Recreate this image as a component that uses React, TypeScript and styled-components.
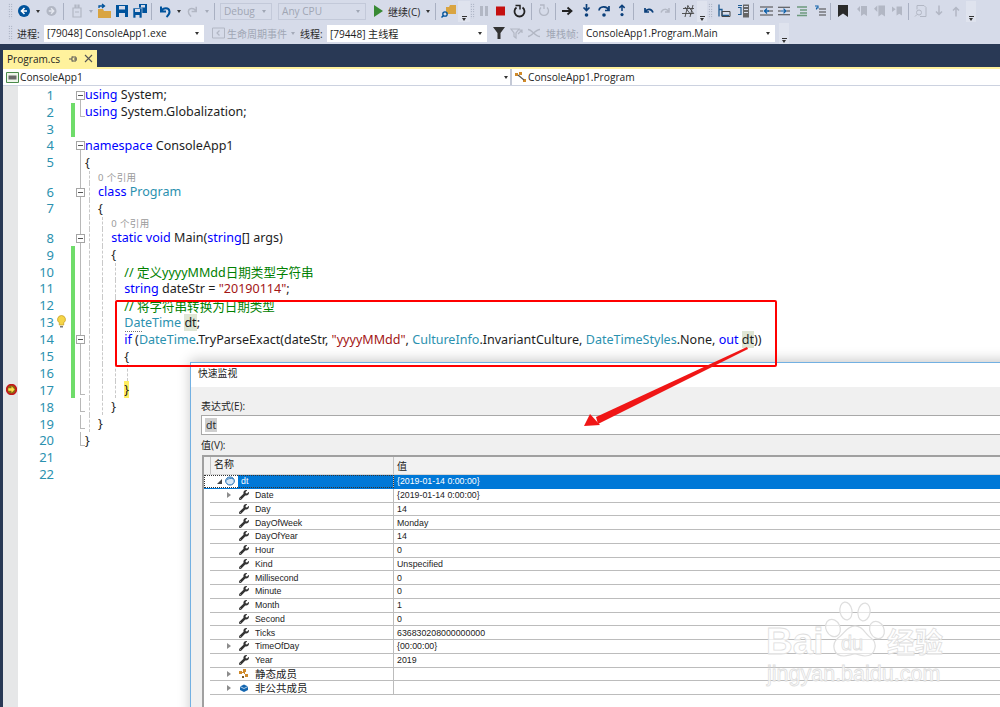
import React from "react";
import styled, { createGlobalStyle } from "styled-components";
import { FaWrench } from "react-icons/fa";

const UI = `"Open Sans", "Noto Sans CJK SC", sans-serif`;

const Global = createGlobalStyle`
  html, body { margin: 0; padding: 0; background: #fff; overflow: hidden; }
  #root { width: 1000px; height: 707px; }
`;

const Page = styled.div`
  position: relative;
  width: 1000px;
  height: 707px;
  overflow: hidden;
  display: flex;
  flex-direction: column;
  background: #293955;
  font-family: ${UI};
  color: #1e1e1e;
`;

const ToolRow = styled.div`
  display: flex;
  align-items: center;
  height: 22px;
  background: #d6dbe9;
  flex: none;
`;

const Tool = styled.span<{ $w: number; $ml: number }>`
  flex: none;
  display: flex;
  align-items: center;
  justify-content: center;
  width: ${(p) => p.$w}px;
  margin-left: ${(p) => p.$ml}px;
  height: 16px;
  svg { display: block; width: 100%; height: 100%; overflow: visible; }
`;

const Grip = styled.span<{ $w: number; $ml: number }>`
  flex: none;
  width: ${(p) => p.$w}px;
  margin-left: ${(p) => p.$ml}px;
  height: 16px;
  background-image: radial-gradient(#8a93a8 0.7px, transparent 0.8px);
  background-size: 2.5px 2.5px;
`;

const Sep = styled.span<{ $w: number; $ml: number }>`
  flex: none;
  width: 1px;
  margin-left: ${(p) => p.$ml}px;
  height: 17px;
  background: #a9b0c2;
`;

const Caret = styled.span<{ $w: number; $ml: number; $off?: boolean }>`
  flex: none;
  width: ${(p) => p.$w}px;
  margin-left: ${(p) => p.$ml}px;
  height: 16px;
  display: flex;
  align-items: center;
  justify-content: center;
  &::after {
    content: "";
    border-left: 2.5px solid transparent;
    border-right: 2.5px solid transparent;
    border-top: 3px solid ${(p) => (p.$off ? "#a5abb9" : "#333")};
  }
`;

const Overflow = styled.span<{ $w: number; $ml: number }>`
  flex: none;
  box-sizing: border-box;
  width: ${(p) => p.$w}px;
  margin-left: ${(p) => p.$ml}px;
  height: 21px;
  background: #dfe3ee;
  position: relative;
  &::before {
    content: "";
    position: absolute;
    left: 50%;
    bottom: 5px;
    margin-left: -2.5px;
    width: 5px;
    height: 1px;
    background: #333;
  }
  &::after {
    content: "";
    position: absolute;
    left: 50%;
    bottom: 1px;
    margin-left: -2.5px;
    border-left: 2.5px solid transparent;
    border-right: 2.5px solid transparent;
    border-top: 3px solid #333;
  }
`;

const Combo = styled.span<{ $w: number; $ml: number; $off?: boolean }>`
  flex: none;
  box-sizing: border-box;
  width: ${(p) => p.$w}px;
  margin-left: ${(p) => p.$ml}px;
  height: 17px;
  padding: 0 3px;
  display: flex;
  align-items: center;
  justify-content: space-between;
  font-size: 10.1px;
  white-space: nowrap;
  background: ${(p) => (p.$off ? "#d6dbe9" : "#fff")};
  border: ${(p) => (p.$off ? "1px solid #c3c9d9" : "none")};
  color: ${(p) => (p.$off ? "#a0a6b4" : "#1e1e1e")};
  &::after {
    content: "";
    margin-right: 2px;
    border-left: 2.5px solid transparent;
    border-right: 2.5px solid transparent;
    border-top: 3px solid ${(p) => (p.$off ? "#a0a6b4" : "#333")};
  }
`;

const Label = styled.span<{ $w: number; $ml: number; $off?: boolean }>`
  flex: none;
  width: ${(p) => p.$w}px;
  margin-left: ${(p) => p.$ml}px;
  font-size: 10px;
  white-space: nowrap;
  color: ${(p) => (p.$off ? "#a0a6b4" : "#2a2a2a")};
`;

const B = "#00539c";
const G = "#b2b7c4";
const K = "#222";
const icons: Record<string, React.ReactNode> = {
  back: <svg viewBox="0 0 12 12"><circle cx="6" cy="6" r="6" fill={B} /><path d="M6.500 3 3.500 6l3 3M3.500 6H9" stroke="#fff" strokeWidth="1.600" fill="none" /></svg>,
  fwd: <svg viewBox="0 0 12 12"><circle cx="6" cy="6" r="5.500" fill={G} /><path d="M5.500 3l3 3-3 3M8.500 6H3" stroke="#e4e7ef" strokeWidth="1.500" fill="none" /></svg>,
  newp: <svg viewBox="0 0 12 14"><path d="M2 4h8v9H2zM4 4V1h1v3M7 4V1h1v3M4 8h4" fill="none" stroke={G} strokeWidth="1.200" /></svg>,
  open: <svg viewBox="0 0 13 14"><path d="M0 5h5l1 2h7v7H0z" fill="#d9a441" /><path d="M1 4V2h5M4 0l2.500 2L4 4" stroke={B} strokeWidth="1.300" fill="none" /></svg>,
  save: <svg viewBox="0 0 12 12"><path d="M0 0h12v12H0z" fill={B} /><path d="M3 1h6v3.500H3z" fill="#d6dbe9" /><path d="M3 8h6v4H3z" fill="#d6dbe9" /></svg>,
  saveall: <svg viewBox="0 0 14 14"><path d="M6 0h8v9H6z" fill={B} /><path d="M8 1h4v2.500H8z" fill="#d6dbe9" /><path d="M0 4h9v10H0z" fill={B} stroke="#d6dbe9" strokeWidth=".6" /><path d="M2 5h5v3H2zM2.500 11h4v3h-4z" fill="#d6dbe9" /></svg>,
  undo: <svg viewBox="0 0 13 14"><path d="M3 2.500v5h5M3.500 7C5 3.500 11 3 11.500 7.500c.3 2.500-1.500 4-3 5.500" stroke={B} strokeWidth="2" fill="none" /></svg>,
  redo: <svg viewBox="0 0 13 14"><path d="M10 2.500v5H5M9.500 7C8 3.500 2 3 1.500 7.500c-.3 2.500 1.500 4 3 5.500" stroke={G} strokeWidth="1.600" fill="none" /></svg>,
  play: <svg viewBox="0 0 9 12"><path d="M0 0l9 6-9 6z" fill="#388a34" /></svg>,
  find: <svg viewBox="0 0 15 14"><path d="M5 3h3l1-2h6v9H5z" fill="#d9a441" /><circle cx="4" cy="10" r="2.200" fill="none" stroke={B} strokeWidth="1.300" /><path d="M2.500 11.500 0.500 13.500" stroke={B} strokeWidth="1.400" /></svg>,
  pause: <svg viewBox="0 0 8 10"><path d="M0 0h3v10H0zM5 0h3v10H5z" fill={G} /></svg>,
  stop: <svg viewBox="0 0 9 9"><path d="M0 0h9v9H0z" fill="#c50f0f" /></svg>,
  restart: <svg viewBox="0 0 13 13"><path d="M3.500 3a5 5 0 1 0 6 0" stroke={K} strokeWidth="1.800" fill="none" /><path d="M2.500 1h4.500v4" stroke={K} strokeWidth="1.500" fill="none" /></svg>,
  showNext: <svg viewBox="0 0 12 14"><path d="M3 3.500a4.500 4.500 0 1 0 6 0" stroke={G} strokeWidth="1.300" fill="none" /><path d="M2 1h4v4" stroke={G} strokeWidth="1.300" fill="none" /></svg>,
  step: <svg viewBox="0 0 11 10"><path d="M0 5h9M5.500 1.500 9.500 5l-4 3.500" stroke={K} strokeWidth="1.800" fill="none" /></svg>,
  into: <svg viewBox="0 0 9 14"><path d="M4.500 0v6M1.500 3.500l3 3 3-3" stroke="#0b3f7a" strokeWidth="1.700" fill="none" /><circle cx="4.500" cy="11" r="1.800" fill="#0b3f7a" /></svg>,
  over: <svg viewBox="0 0 12 14"><path d="M1 6.500C1.500 2 9 1.500 10.500 6M11 2v4.500H7" stroke="#0b3f7a" strokeWidth="1.700" fill="none" /><circle cx="6" cy="11" r="1.800" fill="#0b3f7a" /></svg>,
  out: <svg viewBox="0 0 9 14"><path d="M4.500 7V1M1.500 3.500l3-3 3 3" stroke="#0b3f7a" strokeWidth="1.700" fill="none" /><circle cx="4.500" cy="11" r="1.800" fill="#0b3f7a" /></svg>,
  mini: <svg viewBox="0 0 10 8"><path d="M1 1v4h4M1.500 4.500C3 1.500 7.500 1.500 9 5.500" stroke="#0b3f7a" strokeWidth="1.700" fill="none" /></svg>,
  miniOff: <svg viewBox="0 0 10 8"><path d="M9 1v4H5M8.500 4.500C7 1.500 2.500 1.500 1 5.500" stroke={G} strokeWidth="1.500" fill="none" /></svg>,
  hatch: <svg viewBox="0 0 13 14"><path d="M3 13 6 1M8 13l3-12M1 4.500h11M0 9.500h11M3 3l6 8M6 2l6 8" stroke="#444" strokeWidth=".9" fill="none" /></svg>,
  flag: <svg viewBox="0 0 13 13"><path d="M1 0v12M1 5h3v6h7" stroke="#1f5b92" strokeWidth="1.300" fill="none" /><path d="M4 7h8v5H4z" fill="none" stroke="#444" /></svg>,
  cols: <svg viewBox="0 0 12 13"><path d="M1 1h4M1 3h3v7H1" stroke="#1f5b92" strokeWidth="1.200" fill="none" /><path d="M6 0h6v13H6z" fill="#666" /><path d="M7 2h4M7 5h4M7 8h4" stroke="#d6dbe9" /></svg>,
  indL: <svg viewBox="0 0 13 10"><path d="M0 1h13M0 9h13M0 5h3M8 5h5" stroke="#444" strokeWidth="1.200" /><path d="M4 5h5M7 2.500 4.500 5 7 7.500" stroke="#0b5fa8" strokeWidth="1.300" fill="none" /></svg>,
  indR: <svg viewBox="0 0 13 10"><path d="M0 1h13M0 9h13M0 5h3M9 5h4" stroke="#444" strokeWidth="1.200" /><path d="M3 5h5M6 2.500 8.500 5 6 7.500" stroke="#0b5fa8" strokeWidth="1.300" fill="none" /></svg>,
  cmt: <svg viewBox="0 0 10 10"><path d="M0 1h10M3 4h7M3 7h7M0 9.500h10" stroke="#6d9a7e" strokeWidth="1.300" /></svg>,
  cmtQ: <svg viewBox="0 0 11 12"><path d="M4 4h7M4 7h7M4 10h7" stroke="#444" strokeWidth="1.200" /><path d="M0 1h3v2H1.500v1.500" stroke="#0b5fa8" strokeWidth="1.100" fill="none" /></svg>,
  mark: <svg viewBox="0 0 10 12"><path d="M0 0h10v12L5 8.500 0 12z" fill="#2a2a2a" /></svg>,
  markP: <svg viewBox="0 0 10 12"><path d="M4 1h6v10L7 9 4 11zM0 4l3-3v6z" fill={G} /></svg>,
  markD: <svg viewBox="0 0 11 12"><path d="M5 1h6v10L8 9 5 11zM0 1l4 3-4 3z" fill={G} /></svg>,
  search: <svg viewBox="0 0 12 13"><path d="M2 5V1h7l2 2v9H5" fill="none" stroke={G} /><circle cx="4" cy="8" r="2.500" fill="none" stroke={G} /><path d="M2 10l-2 2" stroke={G} /></svg>,
  down: <svg viewBox="0 0 8 11"><path d="M4 0v9M1 6l3 3 3-3" stroke={G} strokeWidth="1.500" fill="none" /></svg>,
  up: <svg viewBox="0 0 8 11"><path d="M4 11V2M1 5l3-3 3 3" stroke={G} strokeWidth="1.500" fill="none" /></svg>,
  event: <svg viewBox="0 0 13 11"><path d="M.5 .5h12v10H.5z" fill="none" stroke={G} /><path d="M7.500 3 5 5.500 7.500 8" stroke={G} strokeWidth="1.200" fill="none" /></svg>,
  filter: <svg viewBox="0 0 12 12"><path d="M0 0h12L7.500 6v6h-3V6z" fill="#333" /></svg>,
  flagOff: <svg viewBox="0 0 12 12"><path d="M0 2h8L5 6v5L3 9.500V6zM7 7l4-4M8 3h3v3" fill="none" stroke={G} strokeWidth="1.200" /></svg>,
  cross: <svg viewBox="0 0 12 9"><path d="M0 1c4 0 7 7 12 7M0 8c4 0 7-7 12-7" fill="none" stroke={G} strokeWidth="1.300" /></svg>,
};

type Item =
  | { k: "grip" | "sep"; x: number; w?: number }
  | { k: "caret"; x: number; off?: boolean }
  | { k: "over"; x: number; w: number }
  | { k: "tool"; x: number; w: number; i: string }
  | { k: "combo"; x: number; w: number; t: string; off?: boolean }
  | { k: "label"; x: number; w: number; t: string; off?: boolean };

const tool = (i: string, x: number, w: number): Item => ({ k: "tool", i, x, w });
const sep = (x: number): Item => ({ k: "sep", x });
const caret = (x: number, off?: boolean): Item => ({ k: "caret", x, off });

const rowOne: Item[] = [
  { k: "grip", x: 8 }, tool("back", 18, 12), caret(34), tool("fwd", 46, 11), sep(63), tool("newp", 71, 12), caret(87, true),
  tool("open", 98, 13), tool("save", 116, 12), tool("saveall", 133, 14), sep(151), tool("undo", 158, 13), caret(175),
  tool("redo", 187, 12), caret(203, true), sep(214),
  { k: "combo", x: 220, w: 52, t: "Debug", off: true }, { k: "combo", x: 278, w: 88, t: "Any CPU", off: true },
  tool("play", 374, 9), { k: "label", x: 388, w: 34, t: "继续(C)" }, caret(424), sep(435), tool("find", 441, 15),
  { k: "over", x: 458, w: 12 }, { k: "grip", x: 470 }, tool("pause", 480, 8), tool("stop", 496, 9), tool("restart", 513, 13),
  sep(531), tool("showNext", 538, 12), sep(555), tool("step", 562, 11), tool("into", 582, 9), tool("over", 598, 12), tool("out", 618, 8),
  sep(633), tool("mini", 644, 10), tool("miniOff", 660, 10), sep(675), tool("hatch", 682, 13), { k: "over", x: 697, w: 10 },
  { k: "grip", x: 708 }, tool("flag", 718, 13), tool("cols", 737, 12), sep(753), tool("indL", 760, 13), tool("indR", 778, 12),
  tool("cmt", 797, 10), tool("cmtQ", 815, 11), sep(830), tool("mark", 838, 10), tool("markP", 857, 10), tool("markP", 874, 11), tool("markD", 892, 10),
  sep(908), tool("search", 915, 12), tool("down", 935, 8), tool("up", 952, 8), { k: "over", x: 966, w: 10 },
];

const rowTwo: Item[] = [
  { k: "grip", x: 8 }, { k: "label", x: 17, w: 24, t: "进程:" }, { k: "combo", x: 44, w: 160, t: "[79048] ConsoleApp1.exe" },
  tool("event", 212, 13), { k: "label", x: 227, w: 60, t: "生命周期事件", off: true }, caret(289, true), { k: "label", x: 300, w: 24, t: "线程:" },
  { k: "combo", x: 327, w: 160, t: "[79448] 主线程" }, tool("filter", 493, 12), tool("flagOff", 511, 12), tool("cross", 528, 12),
  { k: "label", x: 546, w: 32, t: "堆栈帧:", off: true }, { k: "combo", x: 583, w: 192, t: "ConsoleApp1.Program.Main" }, { k: "over", x: 779, w: 10 },
];

const widthOf = (it: Item): number => {
  if (it.k === "grip") return 5;
  if (it.k === "sep") return 1;
  if (it.k === "caret") return 7;
  return it.w;
};

function Bar({ items }: { items: Item[] }) {
  let end = 0;
  return (
    <ToolRow>
      {items.map((it, n) => {
        const $w = widthOf(it);
        const $ml = it.x - end;
        end = it.x + $w;
        switch (it.k) {
          case "grip": return <Grip key={n} $w={$w} $ml={$ml} />;
          case "sep": return <Sep key={n} $w={$w} $ml={$ml} />;
          case "caret": return <Caret key={n} $w={$w} $ml={$ml} $off={it.off} />;
          case "over": return <Overflow key={n} $w={$w} $ml={$ml} />;
          case "tool": return <Tool key={n} $w={$w} $ml={$ml}>{icons[it.i]}</Tool>;
          case "combo": return <Combo key={n} $w={$w} $ml={$ml} $off={it.off}>{it.t}</Combo>;
          default: return <Label key={n} $w={$w} $ml={$ml} $off={it.off}>{it.t}</Label>;
        }
      })}
    </ToolRow>
  );
}

const TabStrip = styled.div`
  flex: none;
  height: 23px;
  display: flex;
  align-items: flex-end;
  padding: 0 0 0 3px;
`;

const Tab = styled.div`
  width: 94px;
  height: 17px;
  box-sizing: border-box;
  display: flex;
  align-items: center;
  padding-left: 4px;
  background: #fff29d;
  font-size: 10.1px;
  color: #222;
  span { width: 61px; }
  svg { flex: none; }
`;

const TabClose = styled.svg`
  margin-left: 6px;
`;

const Doc = styled.div`
  flex: 1;
  margin-left: 3px;
  min-height: 0;
  display: flex;
  flex-direction: column;
  background: #fff;
  border-top: 2px solid #fff29d;
`;

const NavBar = styled.div`
  flex: none;
  height: 16px;
  display: flex;
  align-items: center;
  font-size: 10.2px;
  color: #222;
  border-bottom: 1px solid #ccd2e0;
`;

const NavCombo = styled.div<{ $w: number }>`
  width: ${(p) => p.$w}px;
  height: 100%;
  box-sizing: border-box;
  flex: none;
  display: flex;
  align-items: center;
  gap: 1px;
  padding-left: 3px;
  position: relative;
`;

const NavArrow = styled.span`
  margin-left: auto;
  margin-right: 2px;
  border-left: 2.5px solid transparent;
  border-right: 2.5px solid transparent;
  border-top: 3px solid #333;
`;

const NavSplit = styled.span`
  flex: none;
  width: 2px;
  height: 100%;
  background: #c4c9d6;
`;

const Editor = styled.div`
  flex: 1;
  min-height: 0;
  display: flex;
  flex-direction: column;
  padding-top: 0.3px;
  position: relative;
  background: linear-gradient(to right, #e6e7e8 0, #e6e7e8 15px, #fff 15px);
`;

const CodeLine = styled.div`
  position: relative;
  flex: none;
  height: 16.9px;
  display: flex;
  align-items: center;
  font-size: 12.55px;
  white-space: nowrap;
  color: #1e1e1e;
  font-family: "Noto Sans", "Noto Sans CJK SC", sans-serif;
`;

const LensLine = styled(CodeLine)`
  height: 12.4px;
  font-size: 9.5px;
  color: #9a9a9a;
  letter-spacing: 0.4px;
`;

const LineNo = styled.span`
  flex: none;
  width: 51px;
  text-align: right;
  color: #2b91af;
  font-size: 13px;
`;

const ChangeSlot = styled.span<{ $on?: boolean }>`
  flex: none;
  width: 4px;
  height: 100%;
  margin-left: 17px;
  background: ${(p) => (p.$on ? "#6fdc6a" : "transparent")};
`;

const FoldSlot = styled.span`
  flex: none;
  width: 10px;
  height: 100%;
  position: relative;
`;

const FoldLine = styled.span<{ $end?: boolean; $start?: boolean }>`
  position: absolute;
  left: 5px;
  top: ${(p) => (p.$start ? "50%" : "0")};
  bottom: ${(p) => (p.$end ? "3px" : "0")};
  width: ${(p) => (p.$end ? "4px" : "0")};
  border-left: 1px solid #b8b8b8;
  border-bottom: ${(p) => (p.$end ? "1px solid #b8b8b8" : "none")};
`;

const FoldBox = styled.span`
  position: absolute;
  left: 1px;
  top: 50%;
  margin-top: -4px;
  width: 7px;
  height: 7px;
  border: 1px solid #a5a5a5;
  background: #fff;
  &::after {
    content: "";
    position: absolute;
    left: 1px;
    top: 3px;
    width: 5px;
    height: 1px;
    background: #555;
  }
`;

const CodeText = styled.span<{ $level: number }>`
  padding-left: ${(p) => p.$level * 13.1}px;
`;

const Guide = styled.span<{ $x: number }>`
  position: absolute;
  left: ${(p) => p.$x}px;
  top: 0;
  bottom: 0;
  border-left: 1px dashed #c9c9c9;
`;

const Tok = styled.span<{ $c: string }>`
  color: ${(p) =>
    ({ k: "#0000ff", t: "#2b91af", c: "#008000", s: "#a31515", p: "#1e1e1e" } as Record<string, string>)[p.$c]};
`;

const Mark = styled.span`
  background: #dfe6d5;
`;

const Current = styled.span`
  background: #ffee62;
`;

const Bulb = styled.svg`
  position: absolute;
  left: 54px;
  top: 1px;
  width: 9px;
  height: 13px;
`;

const Breakpoint = styled.svg`
  position: absolute;
  left: 3px;
  top: 3px;
  width: 11px;
  height: 11px;
`;

const Hint = styled.span`
  position: absolute;
  left: 122px;
  bottom: -1px;
  width: 17px;
  border-bottom: 1px dotted #777;
`;

type Fold = "none" | "line" | "end" | "box" | "top";
type LineDef = {
  n: number;
  lens?: number;
  change?: boolean;
  fold: Fold;
  guides?: number[];
  level?: number;
  code?: React.ReactNode;
  extra?: React.ReactNode;
};

const T = ({ c, children }: { c: string; children: React.ReactNode }) => <Tok $c={c}>{children}</Tok>;

const lines: LineDef[] = [
  { n: 1, fold: "top", code: <><T c="k">using</T> System;</> },
  { n: 2, change: true, fold: "end", code: <><T c="k">using</T> System.Globalization;</> },
  { n: 3, change: true, fold: "none" },
  { n: 4, fold: "top", code: <><T c="k">namespace</T> ConsoleApp1</> },
  { n: 5, fold: "line", code: "{" },
  { n: 6, lens: 1, fold: "box", guides: [86], level: 1, code: <><T c="k">class</T> <T c="t">Program</T></> },
  { n: 7, fold: "line", guides: [86], level: 1, code: "{" },
  { n: 8, lens: 2, fold: "box", guides: [86, 99], level: 2, code: <><T c="k">static</T> <T c="k">void</T> Main(<T c="k">string</T>[] args)</> },
  { n: 9, change: true, fold: "line", guides: [86, 99], level: 2, code: "{" },
  { n: 10, change: true, fold: "line", guides: [86, 99, 112], level: 3, code: <T c="c">// 定义yyyyMMdd日期类型字符串</T> },
  { n: 11, change: true, fold: "line", guides: [86, 99, 112], level: 3, code: <><T c="k">string</T> dateStr = <T c="s">"20190114"</T>;</> },
  { n: 12, change: true, fold: "line", guides: [86, 99, 112], level: 3, code: <T c="c">// 将字符串转换为日期类型</T> },
  {
    n: 13, change: true, fold: "line", guides: [86, 99, 112], level: 3,
    code: <><T c="t">DateTime</T> <Mark>dt</Mark>;</>,
    extra: (
      <>
        <Bulb viewBox="0 0 9 13"><path d="M4.500.5a4 4 0 0 0-2.200 7.300V10h4.400V7.800A4 4 0 0 0 4.500.5z" fill="#f5d547" stroke="#c9a227" strokeWidth=".8" /><path d="M3 11h3v1.500H3z" fill="#777" /></Bulb>
        <Hint />
      </>
    ),
  },
  {
    n: 14, change: true, fold: "box", guides: [86, 99, 112], level: 3,
    code: <><T c="k">if</T> (<T c="t">DateTime</T>.TryParseExact(dateStr, <T c="s">"yyyyMMdd"</T>, <T c="t">CultureInfo</T>.InvariantCulture, <T c="t">DateTimeStyles</T>.None, <T c="k">out</T> <Mark>dt</Mark>))</>,
  },
  { n: 15, change: true, fold: "line", guides: [86, 99, 112], level: 3, code: "{" },
  { n: 16, change: true, fold: "line", guides: [86, 99, 112, 124], level: 3 },
  {
    n: 17, change: true, fold: "end", guides: [86, 99, 112], level: 3, code: <Current>{"}"}</Current>,
    extra: <Breakpoint viewBox="0 0 11 11"><circle cx="5.500" cy="5.500" r="4.800" fill="#8a6a10" stroke="#c4161c" strokeWidth="1.800" /><path d="M2.300 4.200h3.200V2.300l3.200 3.200-3.200 3.200V6.800H2.300z" fill="#ffe14d" /></Breakpoint>,
  },
  { n: 18, fold: "end", guides: [86, 99], level: 2, code: "}" },
  { n: 19, fold: "end", guides: [86], level: 1, code: "}" },
  { n: 20, fold: "end", code: "}" },
  { n: 21, fold: "none" },
  { n: 22, fold: "none" },
];

function CodeRow({ l }: { l: LineDef }) {
  return (
    <>
      {l.lens !== undefined && (
        <LensLine>
          <LineNo />
          <ChangeSlot />
          <FoldSlot><FoldLine /></FoldSlot>
          {l.guides?.filter((g) => g < (l.lens === 1 ? 90 : 100)).map((g) => <Guide key={g} $x={g} />)}
          <CodeText $level={l.level ?? 0}>0 个引用</CodeText>
        </LensLine>
      )}
      <CodeLine>
        <LineNo>{l.n}</LineNo>
        <ChangeSlot $on={l.change} />
        <FoldSlot>
          {l.fold === "line" && <FoldLine />}
          {l.fold === "end" && <FoldLine $end />}
          {l.fold === "top" && <><FoldLine $start /><FoldBox /></>}
          {l.fold === "box" && <><FoldLine /><FoldBox /></>}
        </FoldSlot>
        {l.guides?.map((g) => <Guide key={g} $x={g} />)}
        <CodeText $level={l.level ?? 0}>{l.code}</CodeText>
        {l.extra}
      </CodeLine>
    </>
  );
}

const Dialog = styled.div`
  position: absolute;
  left: 190px;
  top: 362px;
  width: 830px;
  height: 360px;
  box-sizing: border-box;
  background: #f0f0f0;
  border: 1px solid #72b0e2;
  box-shadow: 0 -2px 12px rgba(0, 0, 0, 0.22);
  display: flex;
  flex-direction: column;
`;

const DialogTitle = styled.div`
  flex: none;
  height: 24px;
  padding: 0 0 4px 7px;
  box-sizing: border-box;
  display: flex;
  align-items: center;
  background: #fff;
  font-size: 9.8px;
  color: #222;
`;

const DialogBody = styled.div`
  flex: 1;
  display: flex;
  flex-direction: column;
  padding: 12px 0 0 10px;
  min-height: 0;
`;

const FieldLabel = styled.div`
  font-size: 10px;
  line-height: 14px;
  color: #222;
`;

const ExprInput = styled.div`
  height: 18px;
  margin: 2px 0 3px;
  padding-left: 3px;
  display: flex;
  align-items: center;
  background: #fff;
  border: 1px solid #a8a8a8;
  border-right: none;
  font-size: 10.5px;
  span { background: #cfcfcf; padding: 0 1px; }
`;

const Tree = styled.div`
  flex: 1;
  margin: 3px 0 0 1px;
  background: #fff;
  border-top: 2px solid #a0a0a0;
  border-left: 2px solid #a0a0a0;
  font-family: "Liberation Sans", "Noto Sans CJK SC", sans-serif;
  font-size: 8.8px;
  color: #222;
`;

const TreeHead = styled.div`
  height: 17px;
  display: flex;
  align-items: center;
  background: #f2f2f2;
  font-size: 10px;
  border-bottom: 1px solid #d6d6d6;
`;

const HeadGutter = styled.span`
  flex: none;
  width: 6px;
  height: 100%;
  border-right: 1px solid #c4c4c4;
`;

const HeadName = styled.span`
  flex: none;
  width: 183px;
  height: 100%;
  box-sizing: border-box;
  padding-left: 3px;
  line-height: 16px;
  border-right: 1px solid #c4c4c4;
`;

const HeadValue = styled.span`
  padding-left: 3px;
`;

const Row = styled.div<{ $sel?: boolean }>`
  height: 13.76px;
  box-sizing: border-box;
  margin-left: ${(p) => (p.$sel ? 0 : 6)}px;
  display: flex;
  align-items: center;
  background: ${(p) => (p.$sel ? "#0078d7" : "transparent")};
  color: ${(p) => (p.$sel ? "#fff" : "#222")};
  border-bottom: 1px solid ${(p) => (p.$sel ? "#0078d7" : "#bcbcbc")};
`;

const NameCell = styled.span<{ $sel?: boolean }>`
  flex: none;
  width: ${(p) => (p.$sel ? 190 : 184)}px;
  height: 100%;
  box-sizing: border-box;
  display: flex;
  align-items: center;
  padding-left: ${(p) => (p.$sel ? 13 : 16)}px;
  gap: ${(p) => (p.$sel ? 3 : 0)}px;
  outline: ${(p) => (p.$sel ? "1px dotted #333" : "none")};
  outline-offset: -1px;
  background: ${(p) => (p.$sel ? "#fff" : "transparent")};
  border-right: 1px solid #bcbcbc;
  white-space: nowrap;
`;

const Twist = styled.span<{ $open?: boolean; $on?: boolean }>`
  flex: none;
  width: 5px;
  height: 7px;
  margin-right: ${(p) => (p.$open ? 0 : 8)}px;
  display: flex;
  align-items: center;
  justify-content: center;
  &::after {
    content: "";
    display: ${(p) => (p.$on || p.$open ? "block" : "none")};
    border-top: ${(p) => (p.$open ? "0" : "3px solid transparent")};
    border-bottom: ${(p) => (p.$open ? "5px solid #444" : "3px solid transparent")};
    border-left: ${(p) => (p.$open ? "5px solid transparent" : "4px solid #8c8c8c")};
  }
`;

const RowIcon = styled.span`
  flex: none;
  width: 10px;
  height: 10px;
  margin-right: 6px;
  display: flex;
  color: #333;
  svg { width: 100%; height: 100%; display: block; }
`;

const SelName = styled.span`
  margin-left: -6px;
  padding: 0 3px;
  display: flex;
  align-items: center;
  color: #fff;
  background: #0078d7;
  align-self: stretch;
  flex: 1;
`;

const ValueCell = styled.span`
  padding-left: 3px;
  white-space: nowrap;
`;

const CnName = styled.span`
  font-size: 10.5px;
`;

const Cube = () => (
  <svg viewBox="0 0 10 10"><path d="M1 3.500 5 1.500l4 2v3.500L5 9 1 7z" fill="#1366b0" /><path d="M1 3.500 5 5.500l4-2" stroke="#fff" strokeWidth=".7" fill="none" /></svg>
);

const Ring = () => (
  <svg viewBox="0 0 10 10"><ellipse cx="5" cy="5" rx="4.300" ry="4" fill="#d8e8f6" stroke="#1366b0" /><path d="M1.500 4C3 2.500 6 2 8.500 3" stroke="#1366b0" strokeWidth=".8" fill="none" /></svg>
);

const Statics = () => (
  <svg viewBox="0 0 10 10"><path d="M0 2h3v3H0zM4 0h3v3H4zM6 5h3v3H6z" fill="#d08a2a" /><path d="M3 3.500h3M5.500 3v2" stroke="#d08a2a" /><path d="M3 7h2v2H3z" fill="#7a5a2a" /></svg>
);

const rows: { name: string; value: string; more?: boolean }[] = [
  { name: "Date", value: "{2019-01-14 0:00:00}", more: true },
  { name: "Day", value: "14" },
  { name: "DayOfWeek", value: "Monday" },
  { name: "DayOfYear", value: "14" },
  { name: "Hour", value: "0" },
  { name: "Kind", value: "Unspecified" },
  { name: "Millisecond", value: "0" },
  { name: "Minute", value: "0" },
  { name: "Month", value: "1" },
  { name: "Second", value: "0" },
  { name: "Ticks", value: "636830208000000000" },
  { name: "TimeOfDay", value: "{00:00:00}", more: true },
  { name: "Year", value: "2019" },
];

const RedBox = styled.div`
  position: absolute;
  left: 115px;
  top: 300px;
  width: 662px;
  height: 67px;
  box-sizing: border-box;
  border: 2px solid #f00;
  border-radius: 2px;
`;

const ArrowLayer = styled.svg`
  position: absolute;
  left: 0;
  top: 0;
  width: 1000px;
  height: 707px;
  pointer-events: none;
`;

const Watermark = styled.div`
  position: absolute;
  left: 765px;
  top: 598px;
  width: 190px;
  height: 90px;
  pointer-events: none;
  color: rgba(255, 255, 255, 0.75);
  -webkit-text-stroke: 0.8px #dedede;
  font-family: "Liberation Sans", "Noto Sans CJK SC", sans-serif;
`;

const WmBai = styled.span`
  position: absolute;
  left: 1px;
  top: 25px;
  font-size: 37px;
  line-height: 37px;
  font-weight: 700;
`;

const WmDu = styled.span`
  position: absolute;
  left: 76px;
  top: 35px;
  font-size: 20px;
  line-height: 20px;
`;

const WmJing = styled.span`
  position: absolute;
  left: 122px;
  top: 32px;
  font-size: 28px;
  line-height: 28px;
  font-weight: 700;
`;

const WmSite = styled.span`
  position: absolute;
  left: 2px;
  top: 65px;
  font-size: 21.5px;
  line-height: 22px;
  white-space: nowrap;
`;

const WmPaw = styled.svg`
  position: absolute;
  left: 58px;
  top: 0;
  width: 70px;
  height: 62px;
`;

export default function App() {
  return (
    <Page>
      <Global />
      <Bar items={rowOne} />
      <Bar items={rowTwo} />
      <TabStrip>
        <Tab>
          <span>Program.cs</span>
          <svg width="10" height="10" viewBox="0 0 10 10"><path d="M1 5h3M4 2.500v5M4 3h4v4H4M6 5h3" stroke="#555" fill="none" /></svg>
          <TabClose width="9" height="9" viewBox="0 0 9 9"><path d="M1 1l7 7M8 1 1 8" stroke="#555" strokeWidth="1.100" /></TabClose>
        </Tab>
      </TabStrip>
      <Doc>
        <NavBar>
          <NavCombo $w={507}>
            <svg width="13" height="11" viewBox="0 0 13 11"><path d="M.5 .5h12v10H.5z" fill="#eef5ea" stroke="#4a8a4a" /><path d="M2.500 3.500h8v4h-8z" fill="#6a6a6a" /></svg>
            ConsoleApp1
            <NavArrow />
          </NavCombo>
          <NavSplit />
          <NavCombo $w={400}>
            <svg width="12" height="11" viewBox="0 0 12 11"><path d="M0 1h3v3H0zM4 0h3v3H4zM8 7h3v3H8z" fill="#d08a2a" /><path d="M3 3l6 5" stroke="#555" strokeWidth="1.200" /></svg>
            ConsoleApp1.Program
          </NavCombo>
        </NavBar>
        <Editor>
          {lines.map((l) => <CodeRow key={l.n} l={l} />)}
        </Editor>
      </Doc>

      <Dialog>
        <DialogTitle>快速监视</DialogTitle>
        <DialogBody>
          <FieldLabel>表达式(E):</FieldLabel>
          <ExprInput><span>dt</span></ExprInput>
          <FieldLabel>值(V):</FieldLabel>
          <Tree>
            <TreeHead>
              <HeadGutter />
              <HeadName>名称</HeadName>
              <HeadValue>值</HeadValue>
            </TreeHead>
            <Row $sel>
              <NameCell $sel>
                <Twist $open />
                <RowIcon><Ring /></RowIcon>
                <SelName>dt</SelName>
              </NameCell>
              <ValueCell>{"{2019-01-14 0:00:00}"}</ValueCell>
            </Row>
            {rows.map((r) => (
              <Row key={r.name}>
                <NameCell>
                  <Twist $on={r.more} />
                  <RowIcon><FaWrench /></RowIcon>
                  {r.name}
                </NameCell>
                <ValueCell>{r.value}</ValueCell>
              </Row>
            ))}
            <Row>
              <NameCell>
                <Twist $on />
                <RowIcon><Statics /></RowIcon>
                <CnName>静态成员</CnName>
              </NameCell>
            </Row>
            <Row>
              <NameCell>
                <Twist $on />
                <RowIcon><Cube /></RowIcon>
                <CnName>非公共成员</CnName>
              </NameCell>
            </Row>
          </Tree>
        </DialogBody>
      </Dialog>

      <RedBox />
      <ArrowLayer viewBox="0 0 1000 707">
        <path d="M747 347 L748 349 L598 424 L596 417 Z" fill="#f01616" />
        <path d="M584 426 L590 414 L600 425 Z" fill="#f01616" />
      </ArrowLayer>

      <Watermark>
        <WmPaw viewBox="0 0 70 62">
          <g fill="rgba(255,255,255,.6)" stroke="#dedede" strokeWidth="1.200">
            <ellipse cx="23" cy="13" rx="6" ry="9" transform="rotate(-10 23 13)" />
            <ellipse cx="41" cy="14" rx="6" ry="9" transform="rotate(10 41 14)" />
            <ellipse cx="10" cy="30" rx="7" ry="9" transform="rotate(-25 10 30)" />
            <ellipse cx="54" cy="32" rx="7" ry="9" transform="rotate(-25 54 32)" />
            <path d="M32 28c8 0 10 8 16 12 7 5 5 18-6 18-4 0-7-2-10-2s-7 2-11 2C10 58 8 46 15 40c6-4 9-12 17-12z" />
          </g>
        </WmPaw>
        <WmBai>Bai</WmBai>
        <WmDu>du</WmDu>
        <WmJing>经验</WmJing>
        <WmSite>jingyan.baidu.com</WmSite>
      </Watermark>
    </Page>
  );
}
